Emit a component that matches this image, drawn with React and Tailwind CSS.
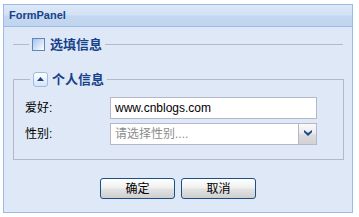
import React from "react";

const FONT = "font-['Liberation_Sans','Noto_Sans_CJK_SC',sans-serif]";

function Checkbox() {
  return (
    <span className="inline-block w-[13px] h-[13px] border border-[#5b86c0] bg-[linear-gradient(135deg,#a9c4ea_0%,#d6e3f6_55%,#ffffff_100%)]" />
  );
}

function CollapseTool() {
  return (
    <span className="inline-flex items-center justify-center w-[15px] h-[15px] rounded-[3px] border border-[#9dbde6] bg-[linear-gradient(to_bottom,#ffffff_0%,#e9f1fb_50%,#d6e4f5_100%)]">
      <svg width="7" height="4" viewBox="0 0 7 4">
        <path d="M3.5 0 L7 4 L0 4 Z" fill="#15428b" />
      </svg>
    </span>
  );
}

function Chevron() {
  return (
    <svg width="8" height="6" viewBox="0 0 8 6">
      <path d="M0 0 L4 3 L8 0 L8 2.2 L4 6 L0 2.2 Z" fill="#1d4b8f" />
    </svg>
  );
}

function Btn({ children }) {
  return (
    <button className="w-[75px] h-[21px] rounded-[3px] border border-[#1c4f86] bg-[linear-gradient(to_bottom,#ffffff_0%,#f0f0f0_45%,#e2e2e2_55%,#cfcfcf_100%)] text-[12px] leading-none text-black flex items-center justify-center">
      {children}
    </button>
  );
}

export default function App() {
  return (
    <div className={`w-[359px] h-[217px] bg-white pt-[4px] pl-[3px] ${FONT}`}>
      <div className="w-[350px] flex flex-col">
        <div className="h-[23px] border border-[#99bbe8] bg-[linear-gradient(to_bottom,#dde8f7_0%,#d3e1f4_48%,#c3d7f0_52%,#c1d5ef_100%)] pl-[5px] flex items-center">
          <span className="text-[11px] font-bold text-[#15428b] leading-none">FormPanel</span>
        </div>
        <div className="h-[186px] border border-t-0 border-[#99bbe8] bg-[#dfe8f6] pl-[9px] pt-[9px]">
          <fieldset className="w-[330px] border-0 border-t border-[#b5b8c8] m-0 p-0 pl-[16px]">
            <legend className="px-[3px] flex items-center gap-[5px] h-[16px]">
              <Checkbox />
              <span className="text-[13px] font-bold text-[#15428b] leading-none">选填信息</span>
            </legend>
          </fieldset>

          <fieldset className="mt-[19px] w-[331px] border border-[#b5b8c8] m-0 pl-[11px] pt-[10px] pb-[14px] pr-[0px]">
            <legend className="ml-[5px] px-[3px] flex items-center gap-[4px] h-[16px]">
              <CollapseTool />
              <span className="text-[13px] font-bold text-[#15428b] leading-none">个人信息</span>
            </legend>
            <div className="flex flex-col gap-[4px]">
              <div className="flex items-center">
                <span className="w-[85px] text-[12px] text-black">爱好:</span>
                <div className="w-[207px] h-[22px] border border-[#b5b8c8] bg-white flex items-center px-[4px] text-[12px] text-black">
                  www.cnblogs.com
                </div>
              </div>
              <div className="flex items-center">
                <span className="w-[85px] text-[12px] text-black">性别:</span>
                <div className="w-[207px] h-[22px] flex">
                  <div className="flex-1 border border-[#b5b8c8] bg-white flex items-center px-[4px] text-[12px] text-[#8c8c8c]">
                    请选择性别....
                  </div>
                  <div className="w-[18px] h-[22px] border border-l-0 border-[#b5b8c8] bg-[linear-gradient(to_bottom,#fafafa_0%,#ececec_45%,#dcdcdc_55%,#d2d2d2_100%)] flex items-start justify-center pt-[6px]">
                    <Chevron />
                  </div>
                </div>
              </div>
            </div>
          </fieldset>

          <div className="mt-[18px] w-[330px] flex justify-center gap-[6px]">
            <Btn>确定</Btn>
            <Btn>取消</Btn>
          </div>
        </div>
      </div>
    </div>
  );
}
